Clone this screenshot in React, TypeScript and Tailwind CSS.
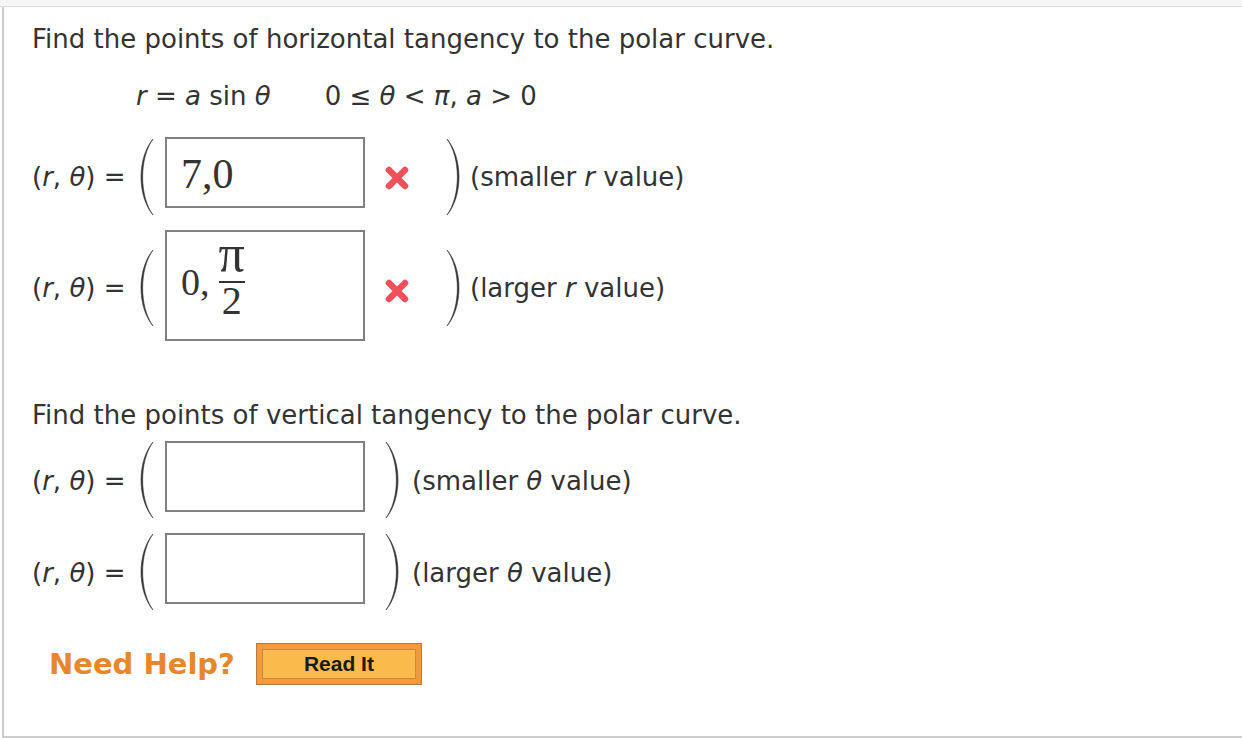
import React from "react";

const font = { fontFamily: '"DejaVu Sans", Verdana, sans-serif' };

function LeftParen() {
  return (
    <svg width="16" height="78" viewBox="0 0 16 78" className="shrink-0">
      <path d="M15 1 C-1 20 -1 58 15 77 C1.2 58 1.2 20 15 1 Z" fill="#333" stroke="#333" strokeWidth="0.6" />
    </svg>
  );
}

function RightParen() {
  return (
    <svg width="16" height="78" viewBox="0 0 16 78" className="shrink-0">
      <path d="M1 1 C17 20 17 58 1 77 C14.8 58 14.8 20 1 1 Z" fill="#333" stroke="#333" strokeWidth="0.6" />
    </svg>
  );
}

function Wrong() {
  return (
    <svg width="26" height="26" viewBox="0 0 26 26" className="shrink-0">
      <path d="M5 5 L21 21 M21 5 L5 21" stroke="#f0505a" strokeWidth="6.5" strokeLinecap="round" />
    </svg>
  );
}

function Row({
  children,
  box,
  wrong,
  note,
  textShift,
  parenShift,
}: {
  children?: React.ReactNode;
  box: string;
  wrong?: boolean;
  note: React.ReactNode;
  textShift: string;
  parenShift: string;
}) {
  return (
    <div className={`flex items-center ${box}`}>
      <span className={`w-[106px] shrink-0 whitespace-nowrap ${textShift}`}>
        (<i>r</i>, <i>θ</i>) =
      </span>
      <span className={parenShift}>
        <LeftParen />
      </span>
      <div
        className="ml-[11px] w-[200px] h-full shrink-0 border-2 border-[#808080] flex items-center pl-[14px] text-[#333]"
        style={{ fontFamily: '"Liberation Serif", "Times New Roman", serif' }}
      >
        {children}
      </div>
      {wrong ? (
        <>
          <span className="ml-[19px] mt-[10px]">
            <Wrong />
          </span>
          <span className={`ml-[36px] ${parenShift}`}>
            <RightParen />
          </span>
          <span className={`ml-[8px] whitespace-nowrap ${textShift}`}>{note}</span>
        </>
      ) : (
        <>
          <span className={`ml-[20px] ${parenShift}`}>
            <RightParen />
          </span>
          <span className={`ml-[11px] whitespace-nowrap ${textShift}`}>{note}</span>
        </>
      )}
    </div>
  );
}

export default function App() {
  return (
    <div className="w-[1242px] h-[738px] bg-white overflow-hidden text-[#333] text-[26px]" style={font}>
      <div className="h-[7px] bg-[#f5f5f5] border-b border-[#dddddd]" />
      <div className="ml-[2px] h-[731px] border-l-2 border-b-2 border-[#cccccc] pl-[28px] pt-[16px]">
        <p className="leading-[32px]">Find the points of horizontal tangency to the polar curve.</p>
        <p className="mt-[25px] ml-[104px] leading-[32px] whitespace-nowrap">
          <i>r</i> = <i>a</i> sin <i>θ</i>
          <span className="ml-[54px]">
            0 ≤ <i>θ</i> &lt; <i>π</i>, <i>a</i> &gt; 0
          </span>
        </p>
        <div className="mt-[25px]">
          <Row
            box="h-[71px]"
            wrong
            textShift="mt-[9px]"
            parenShift="mt-[8px]"
            note={
              <>
                (smaller <i>r</i> value)
              </>
            }
          >
            <span className="text-[42px] leading-none mt-[2px]">7,0</span>
          </Row>
        </div>
        <div className="mt-[22px]">
          <Row
            box="h-[111px]"
            wrong
            textShift="mt-[5px]"
            parenShift="mt-[4px]"
            note={
              <>
                (larger <i>r</i> value)
              </>
            }
          >
            <span className="flex items-center leading-none">
              <span className="text-[38px] leading-none mb-[7px]">0,</span>
              <span className="ml-[9px] mb-[7px] flex flex-col items-center">
                <span className="text-[52px] leading-[46px] mt-[-14px] pb-[4px]">π</span>
                <span className="block w-[26px] h-[2px] bg-[#333]" />
                <span className="text-[40px] leading-[36px]">2</span>
              </span>
            </span>
          </Row>
        </div>
        <p className="mt-[58px] leading-[32px]">Find the points of vertical tangency to the polar curve.</p>
        <div className="mt-[10px]">
          <Row
            box="h-[71px]"
            textShift="mt-[9px]"
            parenShift="mt-[7px]"
            note={
              <>
                (smaller <i>θ</i> value)
              </>
            }
          />
        </div>
        <div className="mt-[21px]">
          <Row
            box="h-[71px]"
            textShift="mt-[9px]"
            parenShift="mt-[7px]"
            note={
              <>
                (larger <i>θ</i> value)
              </>
            }
          />
        </div>
        <div className="mt-[39px] ml-[17px] flex items-center">
          <span className="text-[29px] font-bold text-[#e8862a] leading-none">Need Help?</span>
          <button
            className="ml-[21px] w-[166px] h-[42px] border border-[#b87a3a] bg-[#f5993a] p-[5px]"
            style={{ fontFamily: '"Liberation Sans", Arial, sans-serif' }}
          >
            <span className="flex h-full w-full items-center justify-center border border-[#c98a40] bg-[#fbbb4c] text-[21px] font-bold text-[#1a1a1a]">
              Read It
            </span>
          </button>
        </div>
      </div>
    </div>
  );
}
